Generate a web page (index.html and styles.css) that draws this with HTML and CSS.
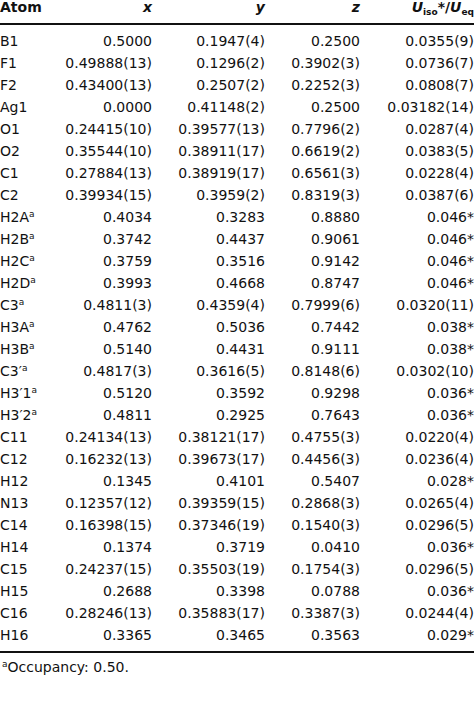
FILE: index.html
```html
<!DOCTYPE html>
<html>
<head>
<meta charset="utf-8">
<link rel="stylesheet" href="styles.css">
</head>
<body>
<table class="coords">
  <thead>
    <tr>
      <th class="atom">Atom</th>
      <th class="num c-x"><i>x</i></th>
      <th class="num c-y"><i>y</i></th>
      <th class="num c-z"><i>z</i></th>
      <th class="num c-u"><i>U</i><sub>iso</sub>*/<i>U</i><sub>eq</sub></th>
    </tr>
  </thead>
  <tbody>
    <tr><td>B1</td><td class="num">0.5000</td><td class="num">0.1947(4)</td><td class="num">0.2500</td><td class="num">0.0355(9)</td></tr>
    <tr><td>F1</td><td class="num">0.49888(13)</td><td class="num">0.1296(2)</td><td class="num">0.3902(3)</td><td class="num">0.0736(7)</td></tr>
    <tr><td>F2</td><td class="num">0.43400(13)</td><td class="num">0.2507(2)</td><td class="num">0.2252(3)</td><td class="num">0.0808(7)</td></tr>
    <tr><td>Ag1</td><td class="num">0.0000</td><td class="num">0.41148(2)</td><td class="num">0.2500</td><td class="num">0.03182(14)</td></tr>
    <tr><td>O1</td><td class="num">0.24415(10)</td><td class="num">0.39577(13)</td><td class="num">0.7796(2)</td><td class="num">0.0287(4)</td></tr>
    <tr><td>O2</td><td class="num">0.35544(10)</td><td class="num">0.38911(17)</td><td class="num">0.6619(2)</td><td class="num">0.0383(5)</td></tr>
    <tr><td>C1</td><td class="num">0.27884(13)</td><td class="num">0.38919(17)</td><td class="num">0.6561(3)</td><td class="num">0.0228(4)</td></tr>
    <tr><td>C2</td><td class="num">0.39934(15)</td><td class="num">0.3959(2)</td><td class="num">0.8319(3)</td><td class="num">0.0387(6)</td></tr>
    <tr><td>H2A<sup>a</sup></td><td class="num">0.4034</td><td class="num">0.3283</td><td class="num">0.8880</td><td class="num">0.046*</td></tr>
    <tr><td>H2B<sup>a</sup></td><td class="num">0.3742</td><td class="num">0.4437</td><td class="num">0.9061</td><td class="num">0.046*</td></tr>
    <tr><td>H2C<sup>a</sup></td><td class="num">0.3759</td><td class="num">0.3516</td><td class="num">0.9142</td><td class="num">0.046*</td></tr>
    <tr><td>H2D<sup>a</sup></td><td class="num">0.3993</td><td class="num">0.4668</td><td class="num">0.8747</td><td class="num">0.046*</td></tr>
    <tr><td>C3<sup>a</sup></td><td class="num">0.4811(3)</td><td class="num">0.4359(4)</td><td class="num">0.7999(6)</td><td class="num">0.0320(11)</td></tr>
    <tr><td>H3A<sup>a</sup></td><td class="num">0.4762</td><td class="num">0.5036</td><td class="num">0.7442</td><td class="num">0.038*</td></tr>
    <tr><td>H3B<sup>a</sup></td><td class="num">0.5140</td><td class="num">0.4431</td><td class="num">0.9111</td><td class="num">0.038*</td></tr>
    <tr><td>C3′<sup>a</sup></td><td class="num">0.4817(3)</td><td class="num">0.3616(5)</td><td class="num">0.8148(6)</td><td class="num">0.0302(10)</td></tr>
    <tr><td>H3′1<sup>a</sup></td><td class="num">0.5120</td><td class="num">0.3592</td><td class="num">0.9298</td><td class="num">0.036*</td></tr>
    <tr><td>H3′2<sup>a</sup></td><td class="num">0.4811</td><td class="num">0.2925</td><td class="num">0.7643</td><td class="num">0.036*</td></tr>
    <tr><td>C11</td><td class="num">0.24134(13)</td><td class="num">0.38121(17)</td><td class="num">0.4755(3)</td><td class="num">0.0220(4)</td></tr>
    <tr><td>C12</td><td class="num">0.16232(13)</td><td class="num">0.39673(17)</td><td class="num">0.4456(3)</td><td class="num">0.0236(4)</td></tr>
    <tr><td>H12</td><td class="num">0.1345</td><td class="num">0.4101</td><td class="num">0.5407</td><td class="num">0.028*</td></tr>
    <tr><td>N13</td><td class="num">0.12357(12)</td><td class="num">0.39359(15)</td><td class="num">0.2868(3)</td><td class="num">0.0265(4)</td></tr>
    <tr><td>C14</td><td class="num">0.16398(15)</td><td class="num">0.37346(19)</td><td class="num">0.1540(3)</td><td class="num">0.0296(5)</td></tr>
    <tr><td>H14</td><td class="num">0.1374</td><td class="num">0.3719</td><td class="num">0.0410</td><td class="num">0.036*</td></tr>
    <tr><td>C15</td><td class="num">0.24237(15)</td><td class="num">0.35503(19)</td><td class="num">0.1754(3)</td><td class="num">0.0296(5)</td></tr>
    <tr><td>H15</td><td class="num">0.2688</td><td class="num">0.3398</td><td class="num">0.0788</td><td class="num">0.036*</td></tr>
    <tr><td>C16</td><td class="num">0.28246(13)</td><td class="num">0.35883(17)</td><td class="num">0.3387(3)</td><td class="num">0.0244(4)</td></tr>
    <tr><td>H16</td><td class="num">0.3365</td><td class="num">0.3465</td><td class="num">0.3563</td><td class="num">0.029*</td></tr>
  </tbody>
</table>
<p class="footnote"><sup>a</sup>Occupancy: 0.50.</p>
</body>
</html>
```

FILE: styles.css
```css
html, body {
  margin: 0;
  padding: 0;
  background: #ffffff;
}

body {
  font-family: "DejaVu Sans", "Liberation Sans", sans-serif;
  font-size: 14px;
  color: #111111;
  width: 474px;
  overflow: hidden;
}

.coords {
  border-collapse: collapse;
  width: 474px;
  table-layout: fixed;
}

.coords th, .coords td {
  padding: 0;
}

.coords thead th {
  height: 23px;
  line-height: 15px;
  vertical-align: top;
  font-weight: bold;
  border-bottom: 2px solid #111111;
  text-align: left;
}

.coords th.num {
  text-align: right;
}

.coords th.atom { width: 60px; }
.coords th.c-x { width: 92px; }
.coords th.c-y { width: 113px; }
.coords th.c-z { width: 95px; }
.coords th.c-u { width: 114px; }

.coords th sub {
  font-size: 9px;
  font-style: normal;
  vertical-align: -3px;
  line-height: 0;
}

.coords tbody td {
  height: 22px;
  line-height: 22px;
  white-space: nowrap;
  text-align: left;
  vertical-align: top;
}

.coords tbody td.num {
  text-align: right;
}

.coords tbody tr:first-child td {
  padding-top: 5px;
}

.coords tbody tr:last-child td {
  padding-bottom: 5px;
  border-bottom: 2px solid #111111;
}

.coords sup,
.footnote sup {
  font-size: 9px;
  vertical-align: 5px;
  line-height: 0;
}

.footnote {
  margin: 5px 0 0 2px;
  line-height: 18px;
}
```
